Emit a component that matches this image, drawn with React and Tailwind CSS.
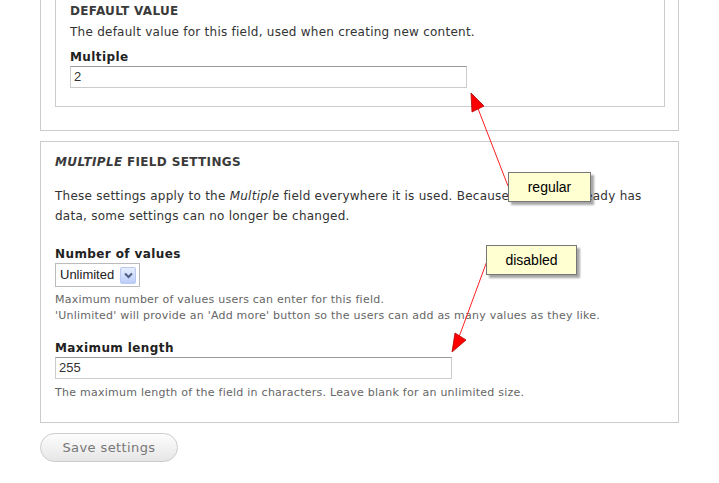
import React from 'react';

const body = "font-['DejaVu_Sans',Verdana,sans-serif]";

function TextInput({ value, width }) {
  return (
    <div
      className={`h-[22px] ${width} border border-[#ccc] border-t-[#999] bg-white pl-[3px] font-['Liberation_Sans',Arial,sans-serif] text-[13px] leading-[20px] text-[#333]`}
    >
      {value}
    </div>
  );
}

function Callout({ label, className }) {
  return (
    <div
      className={`absolute flex items-center justify-center border border-[#777] bg-[#ffffd2] font-['Liberation_Sans',Arial,sans-serif] text-[14px] text-black shadow-[3px_3px_2px_rgba(0,0,0,0.35)] ${className}`}
    >
      {label}
    </div>
  );
}

export default function App() {
  return (
    <div className={`relative h-[483px] w-[719px] overflow-hidden bg-white ${body} text-[#333]`}>
      {/* default value block, its top is scrolled out of view */}
      <div className="ml-[40px] w-[639px] border-x border-b border-[#ccc] pl-[14px] pb-[23px]">
        <div className="w-[610px] border-x border-b border-[#ccc] pl-[14px] pt-[3px] pb-[18px]">
          <div className="text-[12px] font-bold leading-[16px] tracking-[0.3px] text-[#3a3a3a] uppercase">Default value</div>
          <p className="mt-[5px] text-[12px] leading-[16px] tracking-[0.25px]">
            The default value for this field, used when creating new content.
          </p>
          <div className="mt-[9px] text-[12px] font-bold leading-[16px] tracking-[0.4px] text-[#222]">Multiple</div>
          <div className="mt-[1px]">
            <TextInput value="2" width="w-[397px]" />
          </div>
        </div>
      </div>

      {/* field settings */}
      <div className="mt-[10px] ml-[40px] w-[639px] border border-[#ccc] pl-[14px] pt-[12px] pb-[21px]">
        <div className="text-[12px] font-bold leading-[16px] tracking-[0.35px] text-[#3a3a3a] uppercase">
          <em>Multiple</em> field settings
        </div>
        <p className="mt-[16px] w-[600px] text-[12px] leading-[20px] tracking-[0.25px]">
          These settings apply to the <em>Multiple</em> field everywhere it is used. Because the field already has
          data, some settings can no longer be changed.
        </p>

        <div className="mt-[20px] text-[12px] font-bold leading-[16px] tracking-[0.4px] text-[#222]">Number of values</div>
        <div className="mt-[1px] flex h-[24px] w-[85px] items-center justify-between border border-[#bbb] bg-white pl-[4px] pr-[3px] font-['Liberation_Sans',Arial,sans-serif] text-[13px] text-[#222]">
          <span>Unlimited</span>
          <span className="flex h-[17px] w-[16px] items-center justify-center rounded-[2px] border border-[#b8c8f0] bg-[linear-gradient(#e6eeff,#bccdf8)]">
            <svg width="9" height="7" viewBox="0 0 9 7">
              <path d="M1 1.5 L4.5 5 L8 1.5" fill="none" stroke="#4d6185" strokeWidth="2" />
            </svg>
          </span>
        </div>
        <div className="mt-[5px] text-[11px] leading-[16px] tracking-[0.23px] text-[#666]">
          <p>Maximum number of values users can enter for this field.</p>
          <p>'Unlimited' will provide an 'Add more' button so the users can add as many values as they like.</p>
        </div>

        <div className="mt-[16px] text-[12px] font-bold leading-[16px] tracking-[0.4px] text-[#222]">Maximum length</div>
        <div className="mt-[1px]">
          <TextInput value="255" width="w-[397px]" />
        </div>
        <p className="mt-[6px] text-[11px] leading-[16px] tracking-[0.25px] text-[#666]">
          The maximum length of the field in characters. Leave blank for an unlimited size.
        </p>
      </div>

      <div className="mt-[10px] ml-[40px]">
        <button className="h-[29px] w-[138px] rounded-full border border-[#ccc] bg-[linear-gradient(#fdfdfd,#e6e6e6)] text-[13px] tracking-[0.4px] text-[#777]">
          Save settings
        </button>
      </div>

      {/* annotation arrows */}
      <svg className="absolute left-0 top-0" width="719" height="483" viewBox="0 0 719 483">
        <line x1="508" y1="186" x2="477" y2="106" stroke="#ff2020" strokeWidth="1" />
        <polygon points="471,93 472,112 484,106" fill="#ff0000" stroke="#b00000" strokeWidth="0.8" />
        <line x1="487" y1="261" x2="459" y2="337" stroke="#ff2020" strokeWidth="1" />
        <polygon points="452,352 455,333 466,340" fill="#ff0000" stroke="#b00000" strokeWidth="0.8" />
      </svg>
      <Callout label="regular" className="left-[508px] top-[172px] h-[30px] w-[83px]" />
      <Callout label="disabled" className="left-[486px] top-[245px] h-[30px] w-[91px]" />
    </div>
  );
}
